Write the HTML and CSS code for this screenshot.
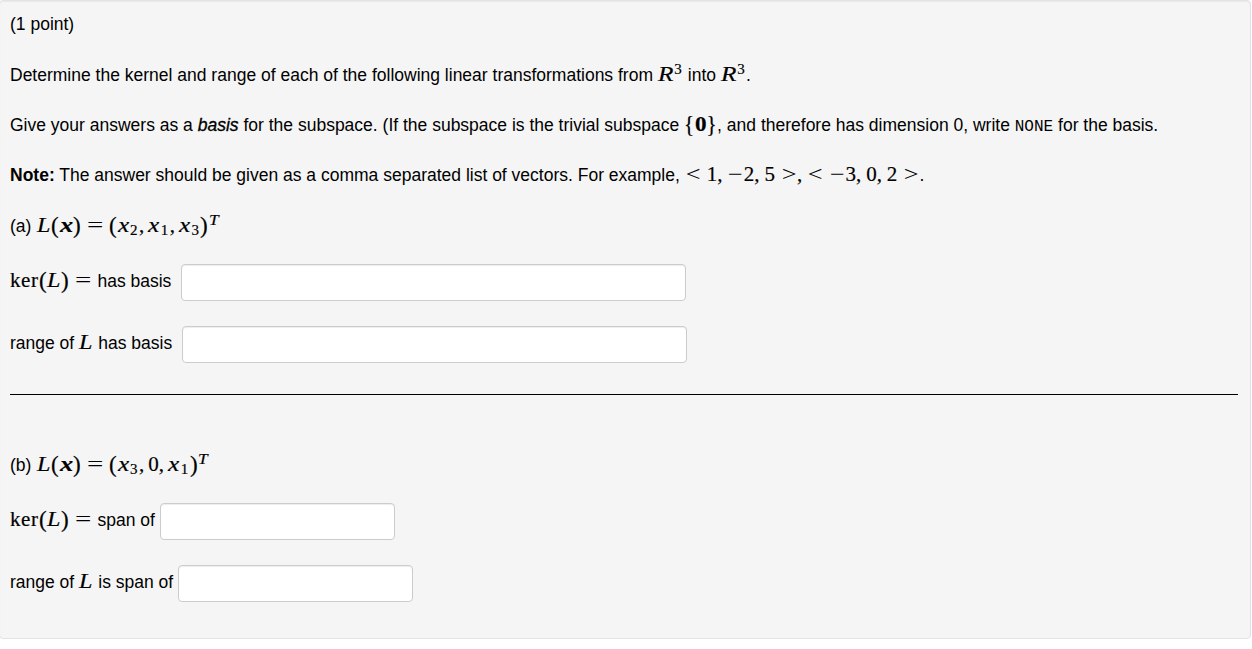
FILE: index.html
```html
<!DOCTYPE html>
<html lang="en">
<head>
    <meta charset="UTF-8">
    <meta name="viewport" content="width=device-width, initial-scale=1.0">
    <title>Kernel and Range</title>
    <link rel="stylesheet" href="styles.css">
</head>
<body>

    <div class="problem">
        <p>(1 point)</p>
        <p class="intro">Determine the kernel and range of each of the following linear transformations from <span class="math"><i class="cap-r">R</i><sup>3</sup></span> into <span class="math"><i class="cap-r">R</i><sup>3</sup></span>.</p>
        <p>Give your answers as a <em class="term">basis</em> for the subspace. (If the subspace is the trivial subspace <span class="math"><span class="brace">{</span><b class="zero">0</b><span class="brace">}</span></span>, and therefore has dimension 0, write <code>NONE</code> for the basis.</p>
        <p><strong>Note:</strong> The answer should be given as a comma separated list of vectors. For example, <span class="math"><span class="op open">&lt;</span>1<span class="comma">,</span><span class="op">&minus;</span>2<span class="comma">,</span>5<span class="op close">&gt;</span><span class="comma">,</span><span class="op open">&lt;</span><span class="op">&minus;</span>3<span class="comma">,</span>0<span class="comma">,</span>2<span class="op close">&gt;</span></span>.</p>

        <p class="part">(a) <span class="math"><i class="cap-l">L</i><span class="paren">(</span><b class="vec">x</b><span class="paren">)</span><span class="op rel">=</span><span class="paren">(</span><i class="var">x</i><sub>2</sub><span class="comma">,</span><i class="var">x</i><sub>1</sub><span class="comma">,</span><i class="var">x</i><sub>3</sub><span class="paren">)</span><sup><i class="trans">T</i></sup></span></p>
        <div class="answer"><span class="math"><span class="ker">ker</span><span class="paren">(</span><i class="cap-l">L</i><span class="paren">)</span><span class="op rel last">=</span></span> has basis <input type="text" class="long"></div>
        <div class="answer">range of <span class="math"><i class="cap-l">L</i></span> has basis <input type="text" class="long"></div>

        <hr>

        <p class="part">(b) <span class="math"><i class="cap-l">L</i><span class="paren">(</span><b class="vec">x</b><span class="paren">)</span><span class="op rel">=</span><span class="paren">(</span><i class="var">x</i><sub>3</sub><span class="comma">,</span>0<span class="comma">,</span><i class="var">x</i><sub>1</sub><span class="paren">)</span><sup><i class="trans">T</i></sup></span></p>
        <div class="answer"><span class="math"><span class="ker">ker</span><span class="paren">(</span><i class="cap-l">L</i><span class="paren">)</span><span class="op rel last">=</span></span> span of <input type="text"></div>
        <div class="answer">range of <span class="math"><i class="cap-l">L</i></span> is span of <input type="text"></div>
    </div>

</body>
</html>
```
FILE: styles.css
```css
* {
    box-sizing: border-box;
}
body {
    margin: 0;
    background: #fff;
    overflow: hidden;
    font-family: "Liberation Sans", Arial, sans-serif;
    font-size: 17.5px;
    line-height: 25px;
    color: #000;
}
.problem {
    width: 1252px;
    height: 639px;
    margin-left: -1px;
    padding: 11px 12px 0 10px;
    background: #f5f5f5;
    border: 1px solid #e3e3e3;
    border-radius: 4px;
    box-shadow: inset 0 1px 1px rgba(0, 0, 0, 0.05);
    white-space: nowrap;
}
p {
    height: 25px;
    margin: 0 0 25px;
}
p.intro {
    margin-top: 26px;
}
p.part {
    margin: 26px 0 25px;
}
.answer {
    height: 37px;
    margin-bottom: 25px;
}
hr {
    height: 1px;
    margin: 31px 0 58px;
    border: 0;
    background: #000;
}
input {
    width: 235px;
    height: 37px;
    margin: 0;
    padding: 5px 7px;
    vertical-align: middle;
    background: #fff;
    border: 1px solid #ccc;
    border-radius: 4px;
    box-shadow: inset 0 1px 1px rgba(0, 0, 0, 0.075);
}
input.long {
    width: 505px;
    margin-left: 4.5px;
}
code {
    font-family: "Liberation Mono", monospace;
    font-size: 16px;
    line-height: 0;
}
.term {
    -webkit-text-stroke: 0.3px #000;
}

/* formulas */
.math {
    font-family: "Liberation Serif", serif;
    font-size: 21px;
    line-height: 0;
    -webkit-text-stroke: 0.2px #000;
}
.math i, .math b, .paren, .brace {
    display: inline-block;
    line-height: 0;
    transform-origin: 0 50%;
}
.cap-r {
    width: 16.3px;
    transform: scaleX(1.2);
}
.cap-l {
    width: 14.3px;
    transform: scaleX(1.15);
}
.part .cap-l {
    margin-left: 0.8px;
}
.var {
    width: 12px;
    transform: scaleX(1.2);
}
.vec {
    width: 13.8px;
    font-style: italic;
    transform: scaleX(1.25);
}
.zero {
    width: 12px;
    transform: scaleX(1.1);
}
.brace {
    width: 10.5px;
    transform: scaleY(1.1);
}
.paren {
    width: 8.2px;
    transform: scale(1.1, 1.1);
}
.op {
    display: inline-block;
    width: 16.3px;
    line-height: 0;
    text-align: center;
    transform: scaleX(1.25);
    -webkit-text-stroke: 0;
}
.open {
    margin-right: 5.8px;
}
.close {
    margin-left: 5.8px;
}
.rel {
    margin: 0 5.8px;
    transform: scaleX(1.38);
}
.last {
    margin-right: 1.2px;
}
.comma {
    margin-right: 4.9px;
}
.part .comma {
    margin-right: 4.2px;
}
.ker {
    letter-spacing: 0.6px;
}
sup, sub {
    font-size: 15px;
    line-height: 0;
    margin-right: 1.3px;
    position: relative;
    vertical-align: baseline;
}
sup {
    top: -7px;
}
sub {
    top: 3px;
    margin-left: 0.5px;
}
.trans {
    width: 10px;
    transform: scaleX(1.15);
}
```
